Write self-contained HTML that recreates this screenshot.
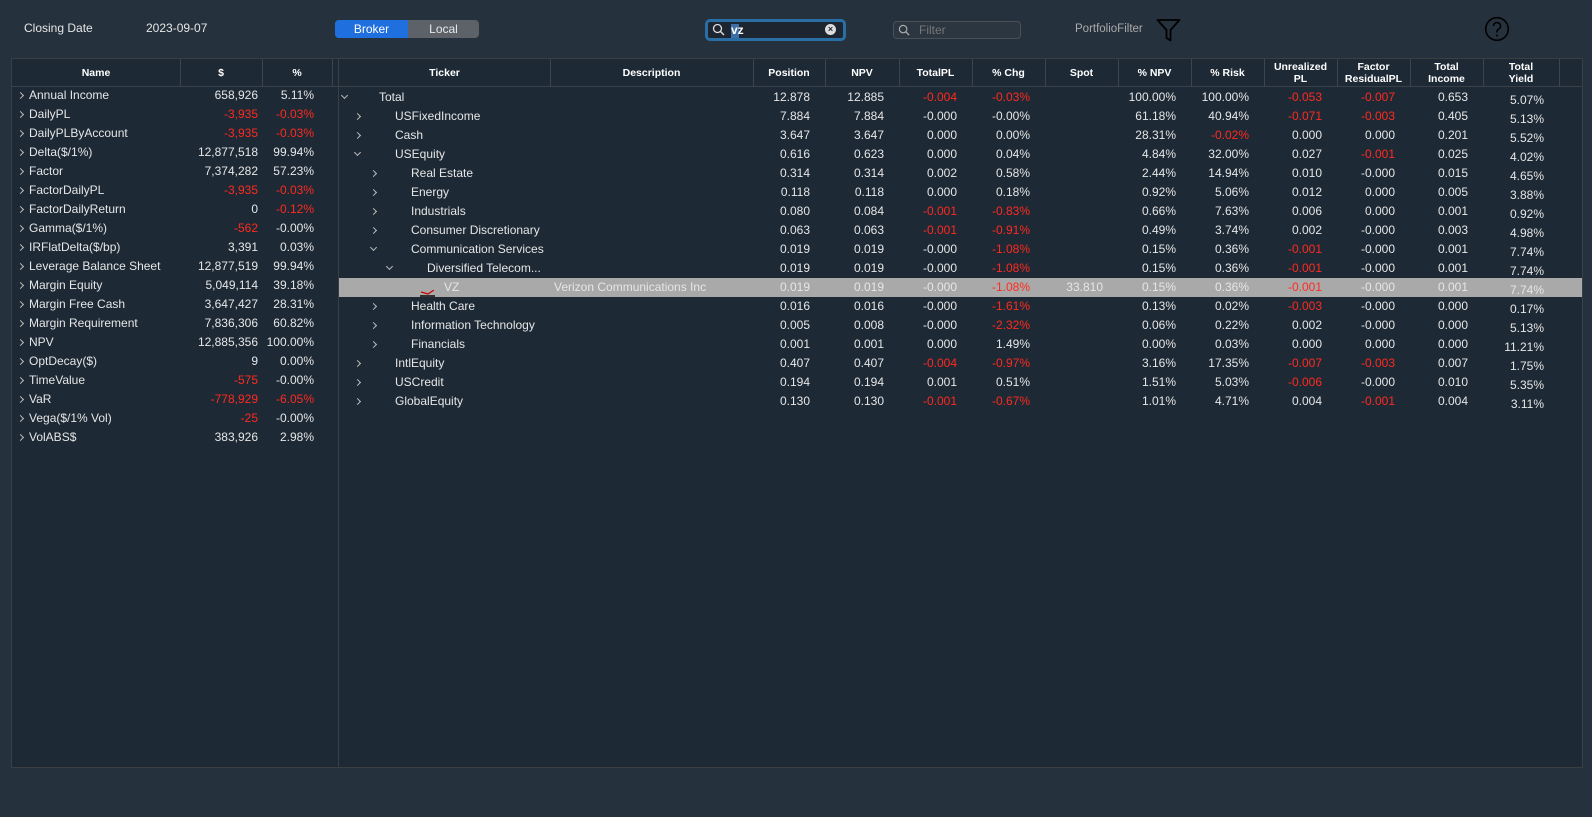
<!DOCTYPE html>
<html><head><meta charset="utf-8"><style>
*{margin:0;padding:0;box-sizing:border-box}
body{width:1592px;height:817px;background:#25313c;font-family:"Liberation Sans",sans-serif;color:#e6e6e6;font-size:12px;position:relative;overflow:hidden}
.a{position:absolute}
.panel{position:absolute;top:58px;height:710px;background:#1d2935;border:1px solid #3a3f44}
.hdr{position:absolute;top:0;left:0;right:0;height:28px;border-bottom:1px solid #3a4048;font-weight:bold;font-size:10.5px;color:#fff}
.hdr div{position:absolute;top:0;height:28px;display:flex;align-items:center;justify-content:center;text-align:center;line-height:12px}
.sep{position:absolute;top:5px;width:1px;height:18px;background:#3d444c}
.row{position:absolute;left:0;right:0;height:19px;line-height:19px;white-space:nowrap}
.row span{position:absolute;top:0}
.r{color:#ff2a1f}
.chev{display:inline-block;width:5px;height:5px;border-right:1.3px solid #bbb;border-bottom:1.3px solid #bbb;position:absolute}
.cr{transform:rotate(-45deg);top:7px}
.cd{transform:rotate(45deg);top:5px}
.hl{background:#a9a9a9}
</style></head><body>
<div class="a" style="left:24px;top:21px">Closing Date</div>
<div class="a" style="left:146px;top:21px">2023-09-07</div>
<div class="a" style="left:335px;top:20px;width:144px;height:18px;border-radius:4px;background:#5c6268;overflow:hidden">
<div class="a" style="left:0;top:0;width:73px;height:18px;background:#1f6fdf;text-align:center;line-height:18px;color:#fff">Broker</div>
<div class="a" style="left:73px;top:0;width:71px;height:18px;text-align:center;line-height:18px;color:#e8e8e8">Local</div></div>
<div class="a" style="left:705px;top:19px;width:141px;height:22px;border:3px solid #2a6ea6;border-radius:5px;background:#1d2630"></div>
<svg class="a" style="left:712px;top:23px" width="14" height="14" viewBox="0 0 14 14"><circle cx="5.5" cy="5.5" r="4" fill="none" stroke="#ddd" stroke-width="1.3"/><path d="M8.5 8.5L12 12" stroke="#ddd" stroke-width="1.4"/></svg>
<div class="a" style="left:731px;top:24px;width:8px;height:14px;background:#3d6fa8"></div>
<div class="a" style="left:731px;top:23px;font-size:12px;color:#fff;font-weight:bold">vz</div>
<div class="a" style="left:825px;top:24px;width:11px;height:11px;border-radius:50%;background:#ddd;color:#1d2630;font-size:9px;line-height:11px;text-align:center;font-weight:bold">×</div>
<div class="a" style="left:893px;top:21px;width:128px;height:18px;border:1px solid #4a5058;border-radius:4px;background:#2b3640"></div>
<svg class="a" style="left:898px;top:24px" width="13" height="13" viewBox="0 0 14 14"><circle cx="5.5" cy="5.5" r="4" fill="none" stroke="#aaa" stroke-width="1.3"/><path d="M8.5 8.5L12 12" stroke="#aaa" stroke-width="1.4"/></svg>
<div class="a" style="left:919px;top:23px;color:#777">Filter</div>
<div class="a" style="left:1075px;top:23px;color:#aaa;font-size:11.5px">PortfolioFilter</div>
<svg class="a" style="left:1156px;top:18px" width="25" height="24" viewBox="0 0 25 24"><path d="M1.5 2H23.5L14.5 12V22.5L10.5 20V12Z" fill="none" stroke="#000" stroke-width="1.8" stroke-linejoin="round"/></svg>
<svg class="a" style="left:1484px;top:16px" width="26" height="26" viewBox="0 0 26 26"><circle cx="13" cy="13" r="11.3" fill="none" stroke="#000" stroke-width="1.6"/><path d="M9.5 10a3.5 3.5 0 1 1 5 3.2c-1 .5-1.5 1.2-1.5 2.3v1" fill="none" stroke="#000" stroke-width="1.6"/><circle cx="13" cy="19.5" r="1" fill="#000"/></svg>

<div class="panel" style="left:11px;width:328px">
<div class="hdr"><div style="left:0;width:168px">Name</div><div class="sep" style="left:168px"></div><div style="left:168px;width:82px">$</div><div class="sep" style="left:250px"></div><div style="left:250px;width:70px">%</div><div class="sep" style="left:320px"></div></div>
</div>
<div class="panel" style="left:338px;width:1245px">
<div class="hdr">
<div style="left:0;width:211px">Ticker</div><div class="sep" style="left:211px"></div>
<div style="left:211px;width:203px">Description</div><div class="sep" style="left:414px"></div>
<div style="left:414px;width:72px">Position</div><div class="sep" style="left:486px"></div>
<div style="left:486px;width:74px">NPV</div><div class="sep" style="left:560px"></div>
<div style="left:560px;width:73px">TotalPL</div><div class="sep" style="left:633px"></div>
<div style="left:633px;width:73px">% Chg</div><div class="sep" style="left:706px"></div>
<div style="left:706px;width:73px">Spot</div><div class="sep" style="left:779px"></div>
<div style="left:779px;width:73px">% NPV</div><div class="sep" style="left:852px"></div>
<div style="left:852px;width:73px">% Risk</div><div class="sep" style="left:925px"></div>
<div style="left:925px;width:73px">Unrealized<br>PL</div><div class="sep" style="left:998px"></div>
<div style="left:998px;width:73px">Factor<br>ResidualPL</div><div class="sep" style="left:1071px"></div>
<div style="left:1071px;width:73px">Total<br>Income</div><div class="sep" style="left:1144px"></div>
<div style="left:1144px;width:76px">Total<br>Yield</div><div class="sep" style="left:1220px"></div>
</div></div>

<div class="a" style="left:12px;top:86px;width:326px">
<style>.L span.n{left:17px}.L .chev{left:6px}.L .v1{right:80px}.L .v2{right:24px}</style>
<div class="L">
<div class="row" style="top:0"><i class="chev cr"></i><span class="n">Annual Income</span><span class="v1">658,926</span><span class="v2">5.11%</span></div>
<div class="row" style="top:19px"><i class="chev cr"></i><span class="n">DailyPL</span><span class="v1 r">-3,935</span><span class="v2 r">-0.03%</span></div>
<div class="row" style="top:38px"><i class="chev cr"></i><span class="n">DailyPLByAccount</span><span class="v1 r">-3,935</span><span class="v2 r">-0.03%</span></div>
<div class="row" style="top:57px"><i class="chev cr"></i><span class="n">Delta($/1%)</span><span class="v1">12,877,518</span><span class="v2">99.94%</span></div>
<div class="row" style="top:76px"><i class="chev cr"></i><span class="n">Factor</span><span class="v1">7,374,282</span><span class="v2">57.23%</span></div>
<div class="row" style="top:95px"><i class="chev cr"></i><span class="n">FactorDailyPL</span><span class="v1 r">-3,935</span><span class="v2 r">-0.03%</span></div>
<div class="row" style="top:114px"><i class="chev cr"></i><span class="n">FactorDailyReturn</span><span class="v1">0</span><span class="v2 r">-0.12%</span></div>
<div class="row" style="top:133px"><i class="chev cr"></i><span class="n">Gamma($/1%)</span><span class="v1 r">-562</span><span class="v2">-0.00%</span></div>
<div class="row" style="top:152px"><i class="chev cr"></i><span class="n">IRFlatDelta($/bp)</span><span class="v1">3,391</span><span class="v2">0.03%</span></div>
<div class="row" style="top:171px"><i class="chev cr"></i><span class="n">Leverage Balance Sheet</span><span class="v1">12,877,519</span><span class="v2">99.94%</span></div>
<div class="row" style="top:190px"><i class="chev cr"></i><span class="n">Margin Equity</span><span class="v1">5,049,114</span><span class="v2">39.18%</span></div>
<div class="row" style="top:209px"><i class="chev cr"></i><span class="n">Margin Free Cash</span><span class="v1">3,647,427</span><span class="v2">28.31%</span></div>
<div class="row" style="top:228px"><i class="chev cr"></i><span class="n">Margin Requirement</span><span class="v1">7,836,306</span><span class="v2">60.82%</span></div>
<div class="row" style="top:247px"><i class="chev cr"></i><span class="n">NPV</span><span class="v1">12,885,356</span><span class="v2">100.00%</span></div>
<div class="row" style="top:266px"><i class="chev cr"></i><span class="n">OptDecay($)</span><span class="v1">9</span><span class="v2">0.00%</span></div>
<div class="row" style="top:285px"><i class="chev cr"></i><span class="n">TimeValue</span><span class="v1 r">-575</span><span class="v2">-0.00%</span></div>
<div class="row" style="top:304px"><i class="chev cr"></i><span class="n">VaR</span><span class="v1 r">-778,929</span><span class="v2 r">-6.05%</span></div>
<div class="row" style="top:323px"><i class="chev cr"></i><span class="n">Vega($/1% Vol)</span><span class="v1 r">-25</span><span class="v2">-0.00%</span></div>
<div class="row" style="top:342px"><i class="chev cr"></i><span class="n">VolABS$</span><span class="v1">383,926</span><span class="v2">2.98%</span></div>
</div></div>

<style>
.R .p{right:772px}.R .q{right:698px}.R .t{right:625px}.R .g{right:552px}.R .s{right:479px}.R .pn{right:406px}.R .rk{right:333px}.R .u{right:260px}.R .f{right:187px}.R .ti{right:114px}.R .y{right:38px;top:3px}
.R .d{left:215px}
</style>
<div class="a R" style="left:339px;top:88px;width:1243px">
<div class="row" style="top:0"><i class="chev cd" style="left:3px"></i><span style="left:40px">Total</span><span class="p">12.878</span><span class="q">12.885</span><span class="t r">-0.004</span><span class="g r">-0.03%</span><span class="pn">100.00%</span><span class="rk">100.00%</span><span class="u r">-0.053</span><span class="f r">-0.007</span><span class="ti">0.653</span><span class="y">5.07%</span></div>
<div class="row" style="top:19px"><i class="chev cr" style="left:16px"></i><span style="left:56px">USFixedIncome</span><span class="p">7.884</span><span class="q">7.884</span><span class="t">-0.000</span><span class="g">-0.00%</span><span class="pn">61.18%</span><span class="rk">40.94%</span><span class="u r">-0.071</span><span class="f r">-0.003</span><span class="ti">0.405</span><span class="y">5.13%</span></div>
<div class="row" style="top:38px"><i class="chev cr" style="left:16px"></i><span style="left:56px">Cash</span><span class="p">3.647</span><span class="q">3.647</span><span class="t">0.000</span><span class="g">0.00%</span><span class="pn">28.31%</span><span class="rk r">-0.02%</span><span class="u">0.000</span><span class="f">0.000</span><span class="ti">0.201</span><span class="y">5.52%</span></div>
<div class="row" style="top:57px"><i class="chev cd" style="left:16px"></i><span style="left:56px">USEquity</span><span class="p">0.616</span><span class="q">0.623</span><span class="t">0.000</span><span class="g">0.04%</span><span class="pn">4.84%</span><span class="rk">32.00%</span><span class="u">0.027</span><span class="f r">-0.001</span><span class="ti">0.025</span><span class="y">4.02%</span></div>
<div class="row" style="top:76px"><i class="chev cr" style="left:32px"></i><span style="left:72px">Real Estate</span><span class="p">0.314</span><span class="q">0.314</span><span class="t">0.002</span><span class="g">0.58%</span><span class="pn">2.44%</span><span class="rk">14.94%</span><span class="u">0.010</span><span class="f">-0.000</span><span class="ti">0.015</span><span class="y">4.65%</span></div>
<div class="row" style="top:95px"><i class="chev cr" style="left:32px"></i><span style="left:72px">Energy</span><span class="p">0.118</span><span class="q">0.118</span><span class="t">0.000</span><span class="g">0.18%</span><span class="pn">0.92%</span><span class="rk">5.06%</span><span class="u">0.012</span><span class="f">0.000</span><span class="ti">0.005</span><span class="y">3.88%</span></div>
<div class="row" style="top:114px"><i class="chev cr" style="left:32px"></i><span style="left:72px">Industrials</span><span class="p">0.080</span><span class="q">0.084</span><span class="t r">-0.001</span><span class="g r">-0.83%</span><span class="pn">0.66%</span><span class="rk">7.63%</span><span class="u">0.006</span><span class="f">0.000</span><span class="ti">0.001</span><span class="y">0.92%</span></div>
<div class="row" style="top:133px"><i class="chev cr" style="left:32px"></i><span style="left:72px">Consumer Discretionary</span><span class="p">0.063</span><span class="q">0.063</span><span class="t r">-0.001</span><span class="g r">-0.91%</span><span class="pn">0.49%</span><span class="rk">3.74%</span><span class="u">0.002</span><span class="f">-0.000</span><span class="ti">0.003</span><span class="y">4.98%</span></div>
<div class="row" style="top:152px"><i class="chev cd" style="left:32px"></i><span style="left:72px">Communication Services</span><span class="p">0.019</span><span class="q">0.019</span><span class="t">-0.000</span><span class="g r">-1.08%</span><span class="pn">0.15%</span><span class="rk">0.36%</span><span class="u r">-0.001</span><span class="f">-0.000</span><span class="ti">0.001</span><span class="y">7.74%</span></div>
<div class="row" style="top:171px"><i class="chev cd" style="left:48px"></i><span style="left:88px">Diversified Telecom...</span><span class="p">0.019</span><span class="q">0.019</span><span class="t">-0.000</span><span class="g r">-1.08%</span><span class="pn">0.15%</span><span class="rk">0.36%</span><span class="u r">-0.001</span><span class="f">-0.000</span><span class="ti">0.001</span><span class="y">7.74%</span></div>
<div class="row hl" style="top:190px"><span style="left:81px;top:6px;width:15px;height:7px"><svg width="15" height="7" viewBox="0 0 15 7"><path d="M1 2L8 4L14 0" stroke="#c00" stroke-width="1.2" fill="none"/><rect x="0" y="5" width="15" height="2" fill="#333"/></svg></span><span style="left:105px">VZ</span><span class="d">Verizon Communications Inc</span><span class="p">0.019</span><span class="q">0.019</span><span class="t">-0.000</span><span class="g r">-1.08%</span><span class="s">33.810</span><span class="pn">0.15%</span><span class="rk">0.36%</span><span class="u r">-0.001</span><span class="f">-0.000</span><span class="ti">0.001</span><span class="y">7.74%</span></div>
<div class="row" style="top:209px"><i class="chev cr" style="left:32px"></i><span style="left:72px">Health Care</span><span class="p">0.016</span><span class="q">0.016</span><span class="t">-0.000</span><span class="g r">-1.61%</span><span class="pn">0.13%</span><span class="rk">0.02%</span><span class="u r">-0.003</span><span class="f">-0.000</span><span class="ti">0.000</span><span class="y">0.17%</span></div>
<div class="row" style="top:228px"><i class="chev cr" style="left:32px"></i><span style="left:72px">Information Technology</span><span class="p">0.005</span><span class="q">0.008</span><span class="t">-0.000</span><span class="g r">-2.32%</span><span class="pn">0.06%</span><span class="rk">0.22%</span><span class="u">0.002</span><span class="f">-0.000</span><span class="ti">0.000</span><span class="y">5.13%</span></div>
<div class="row" style="top:247px"><i class="chev cr" style="left:32px"></i><span style="left:72px">Financials</span><span class="p">0.001</span><span class="q">0.001</span><span class="t">0.000</span><span class="g">1.49%</span><span class="pn">0.00%</span><span class="rk">0.03%</span><span class="u">0.000</span><span class="f">0.000</span><span class="ti">0.000</span><span class="y">11.21%</span></div>
<div class="row" style="top:266px"><i class="chev cr" style="left:16px"></i><span style="left:56px">IntlEquity</span><span class="p">0.407</span><span class="q">0.407</span><span class="t r">-0.004</span><span class="g r">-0.97%</span><span class="pn">3.16%</span><span class="rk">17.35%</span><span class="u r">-0.007</span><span class="f r">-0.003</span><span class="ti">0.007</span><span class="y">1.75%</span></div>
<div class="row" style="top:285px"><i class="chev cr" style="left:16px"></i><span style="left:56px">USCredit</span><span class="p">0.194</span><span class="q">0.194</span><span class="t">0.001</span><span class="g">0.51%</span><span class="pn">1.51%</span><span class="rk">5.03%</span><span class="u r">-0.006</span><span class="f">-0.000</span><span class="ti">0.010</span><span class="y">5.35%</span></div>
<div class="row" style="top:304px"><i class="chev cr" style="left:16px"></i><span style="left:56px">GlobalEquity</span><span class="p">0.130</span><span class="q">0.130</span><span class="t r">-0.001</span><span class="g r">-0.67%</span><span class="pn">1.01%</span><span class="rk">4.71%</span><span class="u">0.004</span><span class="f r">-0.001</span><span class="ti">0.004</span><span class="y">3.11%</span></div>
</div>
</body></html>
